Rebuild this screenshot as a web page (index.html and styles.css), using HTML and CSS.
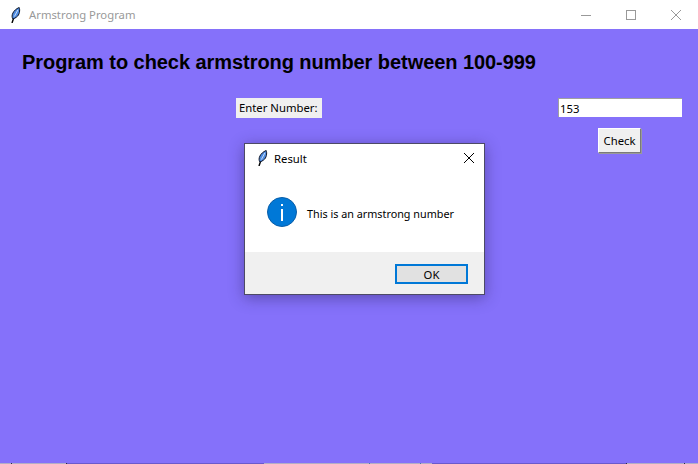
FILE: index.html
```html
<!DOCTYPE html>
<html lang="en">
<head>
  <meta charset="UTF-8" />
  <title>Armstrong Program</title>
  <link rel="stylesheet" href="styles.css">
</head>
<body>
  <svg class="defs" width="0" height="0">
    <symbol id="feather" viewBox="0 0 16 16">
      <path d="M4 16 L6.4 9" stroke="#000" stroke-width="1.4" fill="none"/>
      <path d="M5 12 C2.6 9 5 3 11.2 0.5 C12.2 3 11.6 8 8.6 10 C7.6 11 6 11.5 5 12 Z" fill="#4f8be0" stroke="#0c1424" stroke-width="1"/>
      <path d="M6.4 9.5 L9.8 3" stroke="#c4dcf8" stroke-width="1" fill="none"/>
    </symbol>
  </svg>

  <!-- Title bar -->
  <div class="titlebar">
    <svg class="feather" width="16" height="16"><use href="#feather"/></svg>
    <span class="app-title">Armstrong Program</span>
    <div class="win-controls">
      <svg width="12" height="12" viewBox="0 0 12 12"><path d="M1 6.5H11" stroke="#999" stroke-width="1"/></svg>
      <svg width="12" height="12" viewBox="0 0 12 12"><rect x="1.5" y="1.5" width="9" height="9" fill="none" stroke="#999" stroke-width="1"/></svg>
      <svg width="12" height="12" viewBox="0 0 12 12"><path d="M1 1L11 11M11 1L1 11" stroke="#999" stroke-width="1"/></svg>
    </div>
  </div>

  <!-- Main window -->
  <div class="main">
    <h1>Program to check armstrong number between 100-999</h1>
    <div class="form-row">
      <span class="label">Enter Number:</span>
      <input class="entry" type="text" value="153">
    </div>
    <div class="button-row">
      <button class="check-btn">Check</button>
    </div>
  </div>

  <!-- Desktop showing under the window edge -->
  <div class="edge">
    <i class="e-grey" style="width:11px"></i><i class="e-dark"></i>
    <i class="e-grey" style="width:54px"></i><i class="e-dark"></i>
    <i class="e-purple" style="width:197px"></i>
    <i class="e-grey" style="width:105px"></i><i class="e-blue"></i>
    <i class="e-grey" style="width:50px"></i><i class="e-blue"></i>
    <i class="e-grey" style="width:11px"></i>
    <i class="e-purple" style="width:194px"></i><i class="e-dark"></i>
    <i class="e-grey" style="width:57px"></i><i class="e-dark"></i>
    <i class="e-grey" style="width:13px"></i>
  </div>

  <!-- Result dialog -->
  <div class="dialog">
    <div class="dialog-title">
      <svg class="feather" width="16" height="16"><use href="#feather"/></svg>
      <span>Result</span>
      <svg class="dialog-close" width="12" height="12" viewBox="0 0 12 12"><path d="M1 1L11 11M11 1L1 11" stroke="#000" stroke-width="1"/></svg>
    </div>
    <div class="dialog-body">
      <svg width="30" height="30" viewBox="0 0 30 30">
        <circle cx="15" cy="15" r="14.5" fill="#0078d7" stroke="#0a5ea8" stroke-width="1"/>
        <rect x="14" y="12" width="2" height="12" fill="#fff"/>
        <rect x="14" y="7" width="2" height="2" fill="#fff"/>
      </svg>
      <span class="message">This is an armstrong number</span>
    </div>
    <div class="dialog-footer">
      <button class="ok-btn">OK</button>
    </div>
  </div>
</body>
</html>
```
FILE: styles.css
```css
:root {
  --purple: #8571fa;
  --panel: #f0f0f0;
  --ui-font: "Noto Sans", "Open Sans", sans-serif;
}

* {
  box-sizing: border-box;
}

html, body {
  height: 100%;
}

body {
  margin: 0;
  display: flex;
  flex-direction: column;
  background: var(--purple);
  font-family: var(--ui-font);
  font-size: 11.3px;
  color: #000;
  overflow: hidden;
}

.defs {
  position: absolute;
}

.titlebar {
  height: 29px;
  flex-shrink: 0;
  background: #fff;
  display: flex;
  align-items: center;
  padding-left: 8px;
}

.app-title {
  margin-left: 5px;
  color: #999;
}

.win-controls {
  margin-left: auto;
  margin-right: 16px;
  display: flex;
  gap: 33px;
}

.main {
  flex: 1;
}

h1 {
  margin: 0;
  padding: 22px 0 0 22px;
  font: bold 20px/23px "Liberation Sans", Arial, sans-serif;
  letter-spacing: -0.06px;
}

.form-row {
  display: flex;
  align-items: flex-start;
  margin-top: 24px;
  padding: 0 16px 0 236px;
}

.label {
  width: 86px;
  height: 20px;
  line-height: 20px;
  padding-left: 3px;
  background: var(--panel);
  white-space: nowrap;
}

.entry {
  width: 124px;
  height: 19px;
  margin-left: auto;
  padding: 0 1px;
  background: #fff;
  border: 0;
  border-top: 1px solid #a0a0a0;
  border-left: 1px solid #a0a0a0;
  font: 11.3px var(--ui-font);
  outline: none;
}

.button-row {
  display: flex;
  justify-content: flex-end;
  margin-top: 10px;
  padding-right: 57px;
}

.check-btn {
  width: 43px;
  height: 25px;
  padding: 0;
  background: var(--panel);
  border: 1px solid;
  border-color: #fff #7a7a7a #7a7a7a #fff;
  box-shadow: 1px 1px 0 #9a9a9a;
  font: 11.3px var(--ui-font);
}

.edge {
  display: flex;
  height: 1px;
  flex-shrink: 0;
}

.edge i {
  display: block;
  height: 1px;
}

.edge .e-grey {
  background: #b3aec6;
}

.edge .e-dark {
  width: 1px;
  background: #2a2a44;
}

.edge .e-blue {
  width: 1px;
  background: #4a78a8;
}

.edge .e-purple {
  background: #6a5acb;
}

.dialog {
  position: absolute;
  left: 244px;
  top: 143px;
  width: 241px;
  height: 152px;
  display: flex;
  flex-direction: column;
  background: #fff;
  border: 1px solid #4d4a66;
  box-shadow: 0 3px 14px rgba(40, 30, 90, 0.45);
}

.dialog-title {
  height: 28px;
  display: flex;
  align-items: center;
  padding: 0 9px 0 10px;
}

.dialog-title span {
  margin-left: 3px;
}

.dialog-close {
  margin-left: auto;
}

.dialog-body {
  flex: 1;
  display: flex;
  align-items: center;
  gap: 10px;
  padding: 0 0 0 22px;
}

.message {
  font-size: 10.8px;
  padding-top: 2px;
}

.dialog-footer {
  height: 42px;
  display: flex;
  justify-content: flex-end;
  padding: 12px 16px 0 0;
  background: var(--panel);
}

.ok-btn {
  width: 73px;
  height: 20px;
  padding: 0;
  background: #e1e1e1;
  border: 2px solid #0078d7;
  font: 11.3px var(--ui-font);
}
```
